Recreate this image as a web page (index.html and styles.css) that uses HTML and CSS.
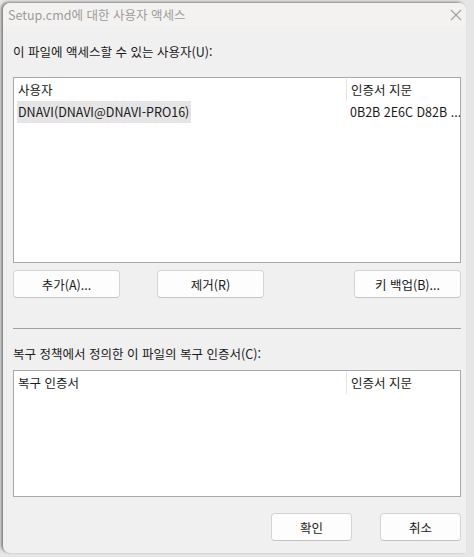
FILE: index.html
```html
<!DOCTYPE html>
<html lang="ko">
<head>
    <meta charset="UTF-8">
    <meta name="viewport" content="width=device-width, initial-scale=1.0">
    <title>Setup.cmd에 대한 사용자 액세스</title>
    <link rel="stylesheet" href="styles.css">
</head>
<body>
    <div class="window">
        <div class="titlebar">
            <span class="title">Setup.cmd에 대한 사용자 액세스</span>
            <svg class="close" width="12" height="12" viewBox="0 0 12 12">
                <path d="M1 1 L11 11 M11 1 L1 11" stroke="#a0a0a0" stroke-width="1.1"/>
            </svg>
        </div>
        <div class="content">
            <div class="label">이 파일에 액세스할 수 있는 사용자(U):</div>
            <div class="listbox users">
                <div class="list-head">
                    <div class="col-name">사용자</div>
                    <div class="col-thumb">인증서 지문</div>
                </div>
                <div class="list-row">
                    <div class="col-name"><span class="selected">DNAVI(DNAVI@DNAVI-PRO16)</span></div>
                    <div class="col-thumb">0B2B 2E6C D82B ...</div>
                </div>
            </div>
            <div class="button-row">
                <button class="btn">추가(A)...</button>
                <button class="btn">제거(R)</button>
                <span class="spacer"></span>
                <button class="btn">키 백업(B)...</button>
            </div>
            <hr class="separator">
            <div class="label second">복구 정책에서 정의한 이 파일의 복구 인증서(C):</div>
            <div class="listbox recovery">
                <div class="list-head">
                    <div class="col-name">복구 인증서</div>
                    <div class="col-thumb">인증서 지문</div>
                </div>
            </div>
            <div class="footer">
                <button class="btn small">확인</button>
                <button class="btn small">취소</button>
            </div>
        </div>
    </div>
</body>
</html>
```

FILE: styles.css
```css
body {
    margin: 0;
    width: 474px;
    height: 557px;
    background: #e6e6e6;
    font-family: "Noto Sans CJK KR", "Noto Sans", sans-serif;
    font-size: 12.5px;
    color: #1a1a1a;
    overflow: hidden;
}
.window {
    margin: 3px 0 0 3px;
    width: 463px;
    height: 550px;
    background: #f0f0f0;
    border-radius: 7px 7px 0 7px;
    box-shadow: -2px -1px 3px rgba(0, 0, 0, 0.45);
    display: flex;
    flex-direction: column;
    overflow: hidden;
}
.titlebar {
    height: 23px;
    background: #f4f2f1;
    display: flex;
    align-items: center;
    justify-content: space-between;
    padding: 0 4px 0 5px;
}
.title {
    color: #9c9c9c;
    font-size: 12.5px;
}
.content {
    width: 448px;
    padding: 15px 0 0 10px;
}
.label {
    height: 22px;
    line-height: 22px;
    margin-bottom: 14px;
}
.label.second {
    margin-bottom: 5px;
}
.listbox {
    background: #fff;
    border: 1px solid #a9a9a9;
    overflow: hidden;
}
.users {
    height: 184px;
}
.recovery {
    height: 125px;
}
.list-head, .list-row {
    display: flex;
    height: 22px;
    line-height: 22px;
    white-space: nowrap;
}
.list-head {
    margin-top: 1px;
}
.list-head .col-name {
    border-right: 1px solid #e5e5e5;
}
.col-name {
    width: 328px;
    flex-shrink: 0;
    padding-left: 4px;
}
.col-thumb {
    padding-left: 4px;
}
.selected {
    display: inline-block;
    background: #e5e5e5;
    padding: 0 2px 0 1px;
    margin-left: -1px;
}
.button-row {
    display: flex;
    gap: 37px;
    margin-top: 7px;
}
.spacer {
    flex: 1;
}
.btn {
    font-family: inherit;
    font-size: 12.5px;
    color: #1a1a1a;
    background: #fdfdfd;
    border: 1px solid #d4d4d4;
    border-bottom-color: #c4c4c4;
    border-radius: 4px;
    width: 107px;
    height: 28px;
    padding: 0;
    margin: 0;
}
.btn.small {
    width: 81px;
}
.separator {
    border: none;
    border-top: 1px solid #a0a0a0;
    margin: 30px 0 14px 0;
}
.footer {
    display: flex;
    justify-content: flex-end;
    gap: 28px;
    margin-top: 16px;
}
```
